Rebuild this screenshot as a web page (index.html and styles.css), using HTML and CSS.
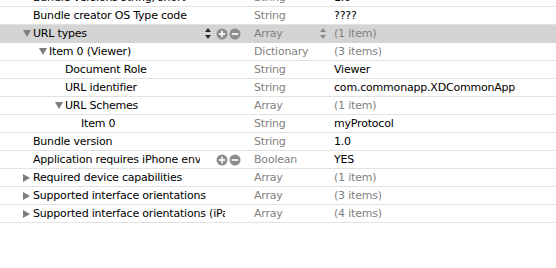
FILE: index.html
```html
<!DOCTYPE html>
<html lang="en">
<head>
    <meta charset="UTF-8">
    <title>Info.plist</title>
    <link rel="stylesheet" href="styles.css">
</head>
<body>

<div class="plist">
    <div class="row">
        <div class="key lvl0"><span class="disc"></span><span class="name">Bundle versions string, short</span></div>
        <div class="type">String</div>
        <div class="value">1.0</div>
    </div>
    <div class="row">
        <div class="key lvl0"><span class="disc"></span><span class="name">Bundle creator OS Type code</span></div>
        <div class="type">String</div>
        <div class="value">????</div>
    </div>
    <div class="row selected">
        <div class="key lvl0 edit">
            <span class="disc"><svg width="8" height="7" viewBox="0 0 8 7"><polygon points="0,0 8,0 4,7" /></svg></span>
            <span class="name">URL types</span>
            <span class="ctrls">
                <svg class="stepper" width="6" height="11" viewBox="0 0 6 11"><polygon points="3,0 6,4 0,4" /><polygon points="0,7 6,7 3,11" /></svg>
                <svg class="btn" width="12" height="12" viewBox="0 0 12 12"><circle cx="6" cy="6" r="5.5" /><rect x="2.8" y="5.2" width="6.4" height="1.6" /><rect x="5.2" y="2.8" width="1.6" height="6.4" /></svg>
                <svg class="btn" width="12" height="12" viewBox="0 0 12 12"><circle cx="6" cy="6" r="5.5" /><rect x="2.8" y="5.2" width="6.4" height="1.6" /></svg>
            </span>
        </div>
        <div class="type">Array
            <svg class="stepper light" width="6" height="11" viewBox="0 0 6 11"><polygon points="3,0 6,4 0,4" /><polygon points="0,7 6,7 3,11" /></svg>
        </div>
        <div class="value muted">(1 item)</div>
    </div>
    <div class="row">
        <div class="key lvl1"><span class="disc"><svg width="8" height="7" viewBox="0 0 8 7"><polygon points="0,0 8,0 4,7" /></svg></span><span class="name">Item 0 (Viewer)</span></div>
        <div class="type">Dictionary</div>
        <div class="value muted">(3 items)</div>
    </div>
    <div class="row">
        <div class="key lvl2"><span class="disc"></span><span class="name">Document Role</span></div>
        <div class="type">String</div>
        <div class="value">Viewer</div>
    </div>
    <div class="row">
        <div class="key lvl2"><span class="disc"></span><span class="name">URL identifier</span></div>
        <div class="type">String</div>
        <div class="value">com.commonapp.XDCommonApp</div>
    </div>
    <div class="row">
        <div class="key lvl2"><span class="disc"><svg width="8" height="7" viewBox="0 0 8 7"><polygon points="0,0 8,0 4,7" /></svg></span><span class="name">URL Schemes</span></div>
        <div class="type">Array</div>
        <div class="value muted">(1 item)</div>
    </div>
    <div class="row">
        <div class="key lvl3"><span class="disc"></span><span class="name">Item 0</span></div>
        <div class="type">String</div>
        <div class="value">myProtocol</div>
    </div>
    <div class="row">
        <div class="key lvl0"><span class="disc"></span><span class="name">Bundle version</span></div>
        <div class="type">String</div>
        <div class="value">1.0</div>
    </div>
    <div class="row">
        <div class="key lvl0 edit">
            <span class="disc"></span>
            <span class="name">Application requires iPhone environment</span>
            <span class="ctrls">
                <span class="stepper-slot"></span>
                <svg class="btn" width="12" height="12" viewBox="0 0 12 12"><circle cx="6" cy="6" r="5.5" /><rect x="2.8" y="5.2" width="6.4" height="1.6" /><rect x="5.2" y="2.8" width="1.6" height="6.4" /></svg>
                <svg class="btn" width="12" height="12" viewBox="0 0 12 12"><circle cx="6" cy="6" r="5.5" /><rect x="2.8" y="5.2" width="6.4" height="1.6" /></svg>
            </span>
        </div>
        <div class="type">Boolean</div>
        <div class="value">YES</div>
    </div>
    <div class="row">
        <div class="key lvl0"><span class="disc"><svg width="7" height="8" viewBox="0 0 7 8"><polygon points="0,0 7,4 0,8" /></svg></span><span class="name">Required device capabilities</span></div>
        <div class="type">Array</div>
        <div class="value muted">(1 item)</div>
    </div>
    <div class="row">
        <div class="key lvl0"><span class="disc"><svg width="7" height="8" viewBox="0 0 7 8"><polygon points="0,0 7,4 0,8" /></svg></span><span class="name">Supported interface orientations</span></div>
        <div class="type">Array</div>
        <div class="value muted">(3 items)</div>
    </div>
    <div class="row">
        <div class="key lvl0"><span class="disc"><svg width="7" height="8" viewBox="0 0 7 8"><polygon points="0,0 7,4 0,8" /></svg></span><span class="name">Supported interface orientations (iPad)</span></div>
        <div class="type">Array</div>
        <div class="value muted">(4 items)</div>
    </div>
</div>

</body>
</html>
```

FILE: styles.css
```css
* {
    margin: 0;
    padding: 0;
    box-sizing: border-box;
}

body {
    background-color: white;
    font-family: "DejaVu Sans", sans-serif;
    font-size: 11px;
    letter-spacing: -0.2px;
    color: #000;
    overflow: hidden;
}

.plist {
    margin-top: -11px;
}

.row {
    display: flex;
    height: 18px;
    line-height: 17px;
    border-bottom: 1px solid #e2e2e2;
    white-space: nowrap;
}

.row.selected {
    background-color: #d4d4d4;
    border-bottom-color: #d4d4d4;
}

.key {
    width: 246px;
    display: flex;
    align-items: center;
    padding-right: 21px;
}

.key.edit {
    padding-right: 5px;
}

.lvl0 { padding-left: 23px; }
.lvl1 { padding-left: 39px; }
.lvl2 { padding-left: 55px; }
.lvl3 { padding-left: 71px; }

.disc {
    width: 10px;
    flex-shrink: 0;
    display: flex;
    align-items: center;
}

.disc svg {
    fill: #7d7d7d;
}

.name {
    flex: 1;
    overflow: hidden;
}

.key.edit .name {
    margin-right: 3px;
}

.ctrls {
    display: flex;
    align-items: center;
    gap: 1px;
    width: 38px;
    flex-shrink: 0;
}

.stepper {
    fill: #2a2a2a;
    margin-left: 2px;
    margin-right: 4px;
}

.stepper-slot {
    width: 12px;
}

.btn circle {
    fill: #8e8e8e;
}

.btn rect {
    fill: #fff;
}

.type {
    width: 88px;
    padding-left: 8px;
    color: #7f7f7f;
    display: flex;
    align-items: center;
    overflow: hidden;
}

.stepper.light {
    fill: #8a8a8a;
    margin-left: auto;
    margin-right: 8px;
}

.value {
    flex: 1;
    overflow: hidden;
}

.value.muted {
    color: #7f7f7f;
}
```
